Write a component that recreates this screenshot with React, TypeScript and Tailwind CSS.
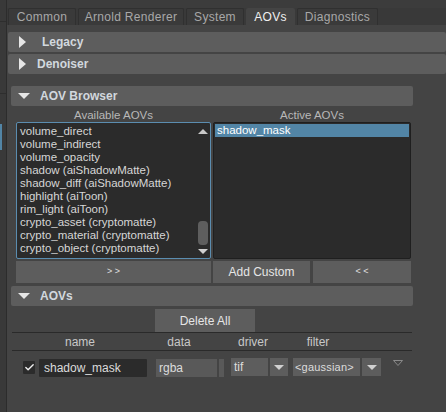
import { Check } from 'lucide-react';

const available = [
    'volume_direct',
    'volume_indirect',
    'volume_opacity',
    'shadow (aiShadowMatte)',
    'shadow_diff (aiShadowMatte)',
    'highlight (aiToon)',
    'rim_light (aiToon)',
    'crypto_asset (cryptomatte)',
    'crypto_material (cryptomatte)',
    'crypto_object (cryptomatte)',
];

const tabs = [
    { label: 'Common', w: 'w-[68px]' },
    { label: 'Arnold Renderer', w: 'w-[106px]' },
    { label: 'System', w: 'w-[58px]' },
    { label: 'AOVs', w: 'w-[49px]', active: true },
    { label: 'Diagnostics', w: 'w-[81px]' },
];

function TriRight() {
    return <span className="block w-0 h-0 border-y-[6px] border-y-transparent border-l-[7px] border-l-[#e6e6e6]" />;
}

function TriDown() {
    return <span className="block w-0 h-0 border-x-[6px] border-x-transparent border-t-[6px] border-t-[#e6e6e6]" />;
}

function Arrow() {
    return <span className="block w-0 h-0 border-x-[5px] border-x-transparent border-t-[5px] border-t-[#d0d0d0]" />;
}

export default function App() {
    return (
        <div className="flex w-[446px] h-[412px] overflow-hidden bg-[#444444] text-[11.5px] text-[#d6d6d6] font-['Liberation_Sans',Arial,sans-serif]">
            {/* outer panel edge */}
            <div className="w-[7px] shrink-0 bg-[#393939] border-r border-[#2c2c2c] flex flex-col">
                <div className="h-[22px] border-b border-[#2e2e2e]" />
                <div className="h-[72px] border-b border-[#2e2e2e]" />
                <div className="mt-[30px] h-[26px] w-[2px] bg-[#5285a6]" />
            </div>

            <div className="flex-1 flex flex-col">
                <div className="h-[8px] bg-[#3c3c3c]" />
                <div className="h-[17px] bg-[#393939] flex items-end gap-[2px] pl-[1px]">
                    {tabs.map((t) => (
                        <div
                            key={t.label}
                            className={`${t.w} h-[17px] rounded-t-[2px] flex items-center justify-center text-[12px] tracking-[0.3px] ${
                                t.active ? 'bg-[#444444] text-[#f0f0f0]' : 'bg-[#3a3a3a] border border-b-0 border-[#303030] text-[#a8a8a8]'
                            }`}
                        >
                            {t.label}
                        </div>
                    ))}
                </div>

                {/* collapsed frames */}
                <div className="mt-[7px] ml-[1px] h-[20px] bg-[#5d5d5d] rounded-[2px] flex items-center pl-[11px] gap-[16px] font-bold text-[12px] text-[#d2d8de]">
                    <TriRight />
                    <span>Legacy</span>
                </div>
                <div className="mt-[2px] ml-[1px] h-[20px] bg-[#5d5d5d] rounded-[2px] flex items-center pl-[11px] gap-[11px] font-bold text-[12px] text-[#d2d8de]">
                    <TriRight />
                    <span>Denoiser</span>
                </div>

                {/* AOV Browser */}
                <div className="mt-[12px] ml-[4px] w-[402px] h-[20px] bg-[#5d5d5d] rounded-[2px] flex items-center pl-[7px] gap-[10px] font-bold text-[12px] text-[#d2d8de]">
                    <TriDown />
                    <span>AOV Browser</span>
                </div>

                <div className="ml-[9px] w-[395px] flex gap-[2px] mt-[2px]">
                    <div className="w-[195px] flex flex-col">
                        <div className="h-[14px] text-center text-[#b8b8b8] leading-[14px]">Available AOVs</div>
                        <div className="h-[137px] bg-[#2b2b2b] border border-[#5b8db0] rounded-[2px] flex pl-[3px] pr-[1px] pt-[2px]">
                            <div className="flex-1 flex flex-col">
                                {available.map((a) => (
                                    <div key={a} className="h-[13px] leading-[13px] whitespace-nowrap">
                                        {a}
                                    </div>
                                ))}
                            </div>
                            <div className="w-[12px] flex flex-col items-center py-[4px]">
                                <span className="block w-0 h-0 border-x-[5px] border-x-transparent border-b-[5px] border-b-[#c8c8c8]" />
                                <div className="flex-1" />
                                <div className="w-[10px] h-[24px] rounded-[4px] bg-[#5e5e5e] mb-[4px]" />
                                <Arrow />
                            </div>
                        </div>
                    </div>
                    <div className="w-[198px] flex flex-col">
                        <div className="h-[14px] text-center text-[#b8b8b8] leading-[14px]">Active AOVs</div>
                        <div className="h-[137px] bg-[#2b2b2b] border border-[#1f1f1f] rounded-[2px] p-[1px]">
                            <div className="h-[13px] leading-[13px] bg-[#5285a6] text-white pl-[2px]">shadow_mask</div>
                        </div>
                    </div>
                </div>

                <div className="ml-[9px] w-[395px] flex gap-[2px] mt-[2px] h-[22px]">
                    <div className="w-[195px] bg-[#5d5d5d] flex items-center justify-center text-[9px] text-[#e0e0e0]">&gt; &gt;</div>
                    <div className="w-[97px] bg-[#5d5d5d] flex items-center justify-center text-[12px] text-[#e6e6e6]">Add Custom</div>
                    <div className="w-[98px] ml-[1px] bg-[#5d5d5d] flex items-center justify-center text-[9px] text-[#e0e0e0]">&lt; &lt;</div>
                </div>

                {/* AOVs */}
                <div className="mt-[3px] ml-[4px] w-[402px] h-[20px] bg-[#5d5d5d] rounded-[2px] flex items-center pl-[7px] gap-[10px] font-bold text-[12px] text-[#d2d8de]">
                    <TriDown />
                    <span>AOVs</span>
                </div>

                <div className="mt-[3px] ml-[148px] w-[100px] h-[23px] bg-[#5d5d5d] flex items-center justify-center text-[12px] text-[#e6e6e6]">Delete All</div>

                <div className="ml-[5px] w-[400px] border-t border-[#2a2a2a] h-[18px] flex items-center text-[12px] text-[#c8c8c8]">
                    <span className="w-[136px] text-center">name</span>
                    <span className="w-[62px] text-center">data</span>
                    <span className="w-[86px] text-center">driver</span>
                    <span className="w-[44px] text-center">filter</span>
                </div>
                <div className="ml-[5px] w-[400px] border-t border-[#2a2a2a]" />

                <div className="mt-[8px] ml-[16px] flex items-start text-[12px]">
                    <div className="mt-[2px] w-[12px] h-[13px] bg-[#2b2b2b] rounded-[1px] flex items-center justify-center">
                        <Check size={11} strokeWidth={3} color="#f0f0f0" />
                    </div>
                    <div className="ml-[4px] w-[108px] h-[18px] bg-[#2b2b2b] rounded-[1px] pl-[5px] leading-[18px] text-[#dcdcdc]">shadow_mask</div>
                    <div className="ml-[9px] w-[61px] h-[18px] bg-[#595959] pl-[3px] leading-[19px] text-[#dcdcdc]">rgba</div>
                    <div className="ml-[2px] w-[5px] h-[18px] bg-[#595959]" />
                    <div className="ml-[7px] -mt-[1px] flex h-[18px]">
                        <div className="w-[37px] bg-[#5d5d5d] pl-[3px] leading-[18px] text-[#dcdcdc]">tif</div>
                        <div className="ml-[2px] w-[18px] bg-[#5d5d5d] flex items-center justify-center">
                            <Arrow />
                        </div>
                    </div>
                    <div className="ml-[5px] -mt-[1px] flex h-[18px]">
                        <div className="w-[67px] bg-[#5d5d5d] pl-[2px] leading-[18px] text-[11px] tracking-[0.2px] text-[#dcdcdc]">&lt;gaussian&gt;</div>
                        <div className="ml-[2px] w-[19px] bg-[#5d5d5d] flex items-center justify-center">
                            <Arrow />
                        </div>
                    </div>
                    <div className="ml-[12px] mt-[1px]">
                        <svg width="10" height="6" viewBox="0 0 10 6">
                            <path d="M0.5 0.5 L9.5 0.5 L5 5.5 Z" fill="none" stroke="#8a8a8a" strokeWidth="1" />
                        </svg>
                    </div>
                </div>
            </div>
        </div>
    );
}
